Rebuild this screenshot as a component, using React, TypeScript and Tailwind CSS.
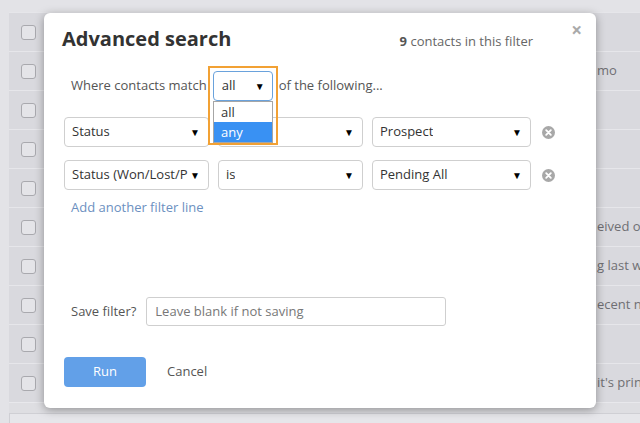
import React from "react";

const font = { fontFamily: '"Open Sans", "Noto Sans", sans-serif' };

const rowTexts = ["", "mo", "", "", "", "eived ou", "g last w", "ecent n", "", "it's prin"];

function Caret() {
  return <span className="text-[10px] leading-none text-black">▼</span>;
}

function Select({ value, width }: { value: string; width: string }) {
  return (
    <div
      className={`${width} h-[30px] flex items-center justify-between pl-[7px] pr-[8px] bg-white border border-[#cfcfcf] rounded-[4px] text-[13px] text-[#333]`}
    >
      <span className="whitespace-nowrap overflow-hidden">{value}</span>
      <Caret />
    </div>
  );
}

function RemoveIcon() {
  return (
    <svg width="13" height="13" viewBox="0 0 14 14" className="ml-[2px] shrink-0">
      <circle cx="7" cy="7" r="7" fill="#a8a8a8" />
      <path d="M4.5 4.5 L9.5 9.5 M9.5 4.5 L4.5 9.5" stroke="#fff" strokeWidth="2" strokeLinecap="round" />
    </svg>
  );
}

export default function App() {
  return (
    <div className="relative w-[640px] h-[423px] overflow-hidden bg-[#e3e3e7]" style={font}>
      {/* background table (dimmed) */}
      <div className="pt-[12px] pl-[9px]">
        <div className="bg-[#d9d9de]">
          {rowTexts.map((t, i) => (
            <div key={i} className="h-[39px] flex items-center border-t border-[#e6e6ea]">
              <div className="shrink-0 ml-[12px] w-[15px] h-[15px] rounded-[3px] border border-[#a9a9ae] bg-[#e4e4e8]" />
              <span className="shrink-0 ml-[561px] text-[13px] text-[#6f6f73] whitespace-nowrap">{t}</span>
            </div>
          ))}
        </div>
        <div className="h-[11px] border-t border-[#e8e8ec] bg-[#dedee2]" />
        <div className="h-[10px] border-t border-[#cfcfd4] border-l bg-[#e6e6ea]" />
      </div>

      {/* modal */}
      <div className="absolute left-[44px] top-[13px] w-[552px] h-[395px] bg-white rounded-[6px] shadow-[0_2px_10px_rgba(0,0,0,0.35)]">
        <div className="flex items-baseline justify-between pl-[18px] pr-[63px] pt-[12px]">
          <h1 className="text-[20px] leading-[28px] font-bold text-[#333]">Advanced search</h1>
          <div className="text-[13px] text-[#666]">
            <span className="font-bold text-[#555]">9</span> contacts in this filter
          </div>
        </div>
        <span className="absolute right-[14px] top-[8px] text-[19px] font-bold leading-none text-[#aaa]">×</span>

        <div className="px-[20px]">
          <div className="mt-[18px] flex items-center h-[30px] text-[13px] text-[#555]">
            <span className="pl-[7px]">Where contacts match</span>
            <div className="ml-[6px] w-[60px] h-[30px] flex items-center justify-between pl-[8px] pr-[7px] bg-white border border-[#6aa2dc] rounded-[4px] text-[#333]">
              <span>all</span>
              <Caret />
            </div>
            <span className="ml-[6px]">of the following...</span>
          </div>

          <div className="mt-[16px] flex items-center gap-[9px]">
            <Select value="Status" width="w-[145px]" />
            <Select value="is" width="w-[145px]" />
            <Select value="Prospect" width="w-[159px]" />
            <RemoveIcon />
          </div>

          <div className="mt-[13px] flex items-center gap-[9px]">
            <Select value="Status (Won/Lost/P" width="w-[145px]" />
            <Select value="is" width="w-[145px]" />
            <Select value="Pending All" width="w-[159px]" />
            <RemoveIcon />
          </div>

          <div className="mt-[8px] pl-[7px] text-[13px] leading-[18px] text-[#6c90bf]">Add another filter line</div>

          <div className="mt-[81px] flex items-center text-[13px]">
            <span className="pl-[7px] text-[#555]">Save filter?</span>
            <div className="ml-[10px] w-[300px] h-[29px] flex items-center px-[8px] border border-[#cfcfcf] rounded-[3px] text-[#777]">
              Leave blank if not saving
            </div>
          </div>

          <div className="mt-[31px] flex items-center text-[13px]">
            <button className="w-[82px] h-[30px] rounded-[4px] bg-[#62a0e8] text-white">Run</button>
            <span className="ml-[21px] text-[#555]">Cancel</span>
          </div>
        </div>
      </div>

      {/* open dropdown with highlight */}
      <div className="absolute left-[208px] top-[66px] w-[70px] h-[79px] border-2 border-[#f2a134]" />
      <div className="absolute left-[213px] top-[101px] w-[60px] bg-white border border-[#a6a6a6] text-[13px] leading-[20px]">
        <div className="pl-[7px] text-[#333]">all</div>
        <div className="pl-[7px] bg-[#3991f3] text-white">any</div>
      </div>
    </div>
  );
}
